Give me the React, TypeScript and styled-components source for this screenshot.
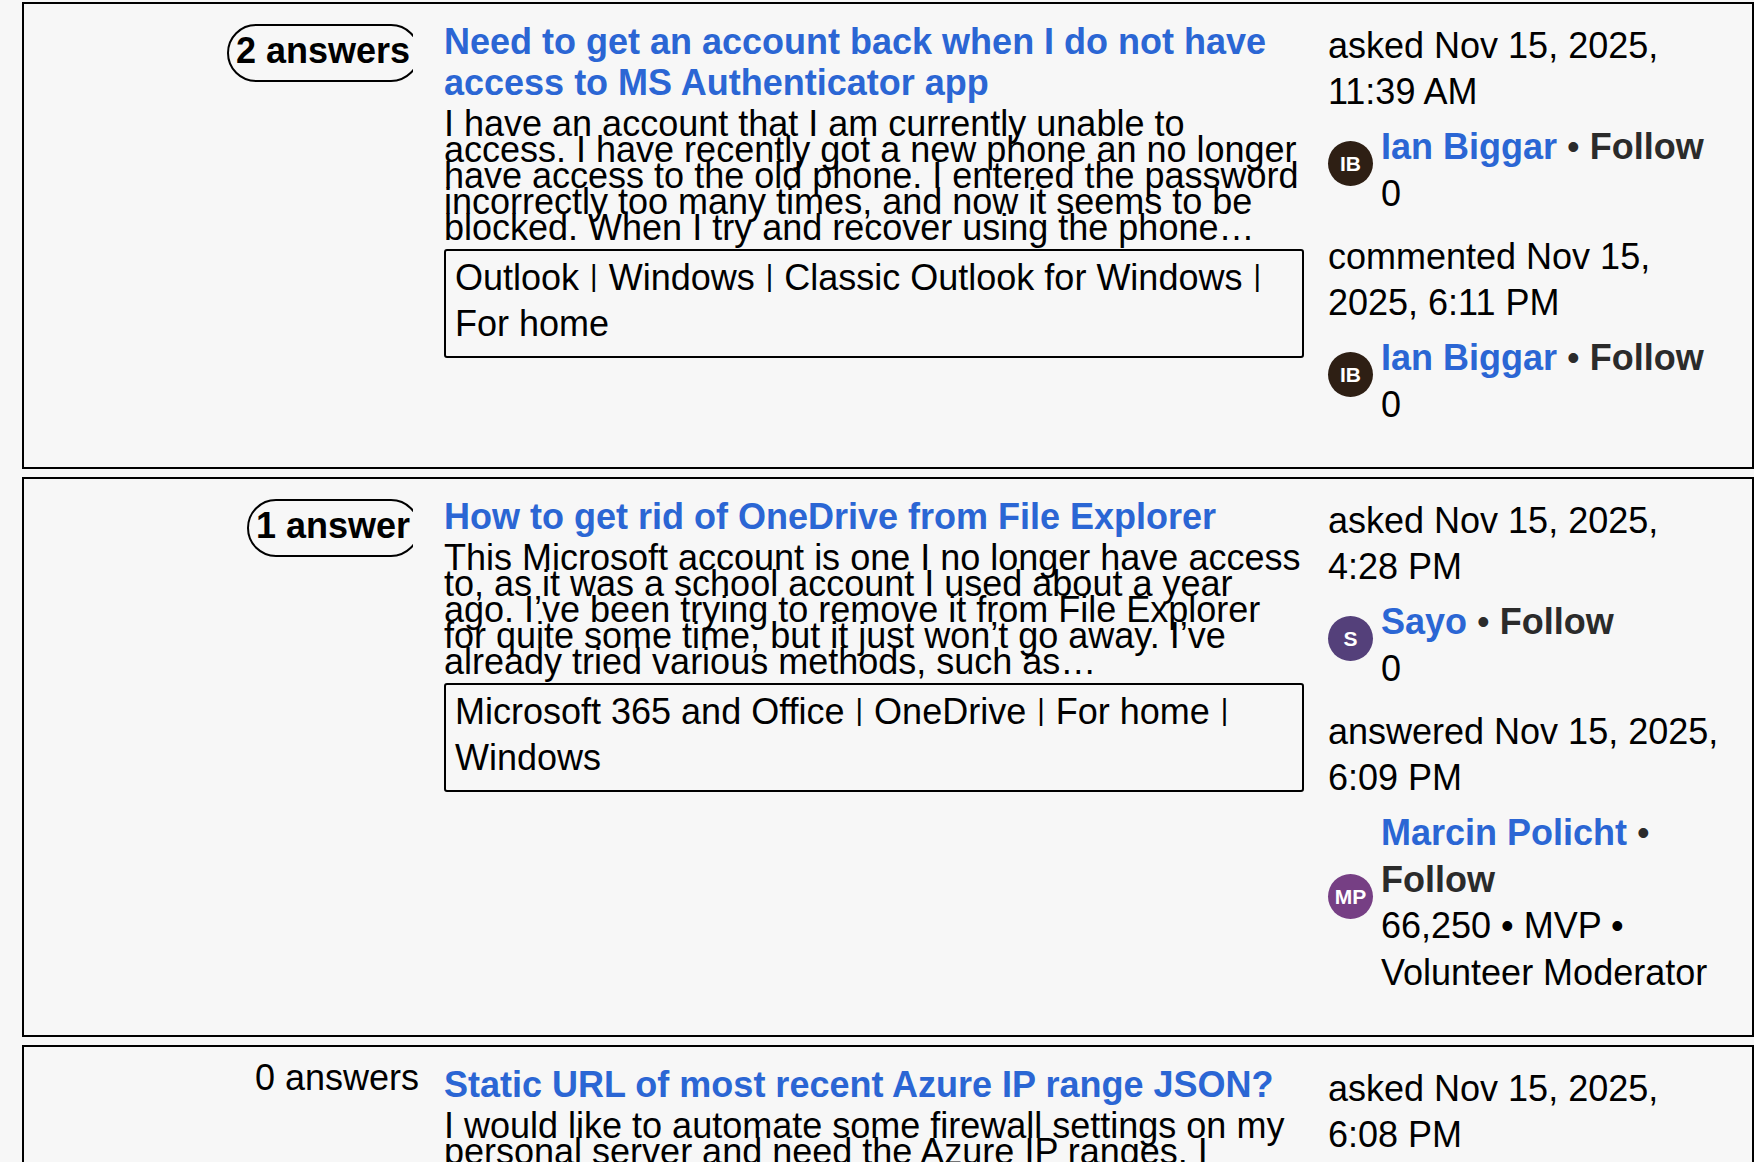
import React from 'react';
import styled, { createGlobalStyle } from 'styled-components';

const GlobalStyle = createGlobalStyle`
  html, body {
    margin: 0;
    height: 1162px;
    overflow: hidden;
    background: #f7f7f7;
  }
  body {
    font-family: "Liberation Sans", Arial, sans-serif;
    font-size: 36px;
    color: #000;
  }
`;

type Person = { initials: string; color: string; name: string; meta: string };
type Activity = { label: string; person?: Person };
type Question = {
  answers: string;
  highlight: boolean;
  title: string;
  snippet: string;
  tags?: string[];
  activity: Activity[];
};

const ian: Person = { initials: 'IB', color: '#2e1f14', name: 'Ian Biggar', meta: '0' };

const questions: Question[] = [
  {
    answers: '2 answers',
    highlight: true,
    title: 'Need to get an account back when I do not have access to MS Authenticator app',
    snippet:
      'I have an account that I am currently unable to access. I have recently got a new phone an no longer have access to the old phone. I entered the password incorrectly too many times, and now it seems to be blocked. When I try and recover using the phone…',
    tags: ['Outlook', 'Windows', 'Classic Outlook for Windows', 'For home'],
    activity: [
      { label: 'asked Nov 15, 2025, 11:39 AM', person: ian },
      { label: 'commented Nov 15, 2025, 6:11 PM', person: ian },
    ],
  },
  {
    answers: '1 answer',
    highlight: true,
    title: 'How to get rid of OneDrive from File Explorer',
    snippet:
      'This Microsoft account is one I no longer have access to, as it was a school account I used about a year ago. I’ve been trying to remove it from File Explorer for quite some time, but it just won’t go away. I’ve already tried various methods, such as…',
    tags: ['Microsoft 365 and Office', 'OneDrive', 'For home', 'Windows'],
    activity: [
      {
        label: 'asked Nov 15, 2025, 4:28 PM',
        person: { initials: 'S', color: '#54407a', name: 'Sayo', meta: '0' },
      },
      {
        label: 'answered Nov 15, 2025, 6:09 PM',
        person: {
          initials: 'MP',
          color: '#763f84',
          name: 'Marcin Policht',
          meta: '66,250 • MVP • Volunteer Moderator',
        },
      },
    ],
  },
  {
    answers: '0 answers',
    highlight: false,
    title: 'Static URL of most recent Azure IP range JSON?',
    snippet:
      'I would like to automate some firewall settings on my personal server and need the Azure IP ranges. I found the download page but the file name changes every week…',
    activity: [{ label: 'asked Nov 15, 2025, 6:08 PM' }],
  },
];

const App = () => (
  <>
    <GlobalStyle />
    <List>
      {questions.map((q) => (
        <Card key={q.title}>
          <AnswerColumn>
            {q.highlight ? (
              <PillClip>
                <Pill>{q.answers}</Pill>
              </PillClip>
            ) : (
              <PlainCount>{q.answers}</PlainCount>
            )}
          </AnswerColumn>
          <MainColumn>
            <Title href="#">{q.title}</Title>
            <Snippet>{q.snippet}</Snippet>
            {q.tags && (
              <Tags>
                {q.tags.map((tag, i) => (
                  <React.Fragment key={tag}>
                    {i > 0 && (
                      <>
                        {' '}
                        <TagBar>|</TagBar>{' '}
                      </>
                    )}
                    {tag}
                  </React.Fragment>
                ))}
              </Tags>
            )}
          </MainColumn>
          <SideColumn>
            {q.activity.map((a) => (
              <Group key={a.label}>
                <DateLine>{a.label}</DateLine>
                {a.person && (
                  <PersonRow>
                    <Avatar $color={a.person.color}>{a.person.initials}</Avatar>
                    <PersonText>
                      <div>
                        <PersonName href="#">{a.person.name}</PersonName> <Dot>•</Dot> <FollowLabel>Follow</FollowLabel>
                      </div>
                      <div>{a.person.meta}</div>
                    </PersonText>
                  </PersonRow>
                )}
              </Group>
            ))}
          </SideColumn>
        </Card>
      ))}
    </List>
  </>
);

export default App;

const List = styled.div`
  display: flex;
  flex-direction: column;
  gap: 8px;
  padding: 2px 0 0 22px;
`;

const Card = styled.div`
  display: grid;
  grid-template-columns: 396px 860px 402px;
  column-gap: 24px;
  align-items: start;
  border: 2px solid #000;
  padding: 17px 22px 39px 0;
  box-sizing: border-box;
`;

const AnswerColumn = styled.div`
  display: flex;
  justify-content: flex-end;
  padding-right: 1px;
`;

const PillClip = styled.div`
  display: flex;
  overflow: hidden;
  margin: 3px 6px 0 0;
`;

const Pill = styled.div`
  margin-right: -7px;
  padding: 0 8px 4px 7px;
  border: 2px solid #000;
  border-radius: 29px;
  font-weight: 700;
  line-height: 50px;
  white-space: nowrap;
`;

const PlainCount = styled.div`
  line-height: 28px;
  white-space: nowrap;
`;

const MainColumn = styled.div`
  display: flex;
  flex-direction: column;
`;

const Title = styled.a`
  color: #2b66d4;
  font-weight: 700;
  line-height: 41px;
  text-decoration: none;
`;

const Snippet = styled.div`
  margin: 8px 0;
  line-height: 26px;
`;

const Tags = styled.div`
  padding: 4px 9px 9px;
  border: 2px solid #000;
  border-radius: 3px;
  line-height: 46px;
`;

const TagBar = styled.span`
  padding: 0 1px;
  font-size: 29px;
  line-height: 0;
  vertical-align: 4px;
`;

const SideColumn = styled.div`
  display: flex;
  flex-direction: column;
  gap: 17px;
  padding-top: 2px;
`;

const Group = styled.div`
  display: flex;
  flex-direction: column;
  gap: 9px;
`;

const DateLine = styled.div`
  line-height: 46px;
`;

const PersonRow = styled.div`
  display: flex;
  align-items: center;
  gap: 8px;
`;

const Avatar = styled.div<{ $color: string }>`
  flex: none;
  width: 45px;
  height: 45px;
  margin-bottom: 14px;
  border-radius: 50%;
  background: ${({ $color }) => $color};
  color: #fff;
  font-size: 21px;
  font-weight: 700;
  line-height: 45px;
  text-align: center;
`;

const PersonText = styled.div`
  min-width: 0;
  line-height: 46.5px;
`;

const PersonName = styled.a`
  color: #2b66d4;
  font-weight: 700;
  text-decoration: none;
`;

const Dot = styled.span`
  color: #2b2b2b;
`;

const FollowLabel = styled.span`
  color: #2b2b2b;
  font-weight: 700;
`;
